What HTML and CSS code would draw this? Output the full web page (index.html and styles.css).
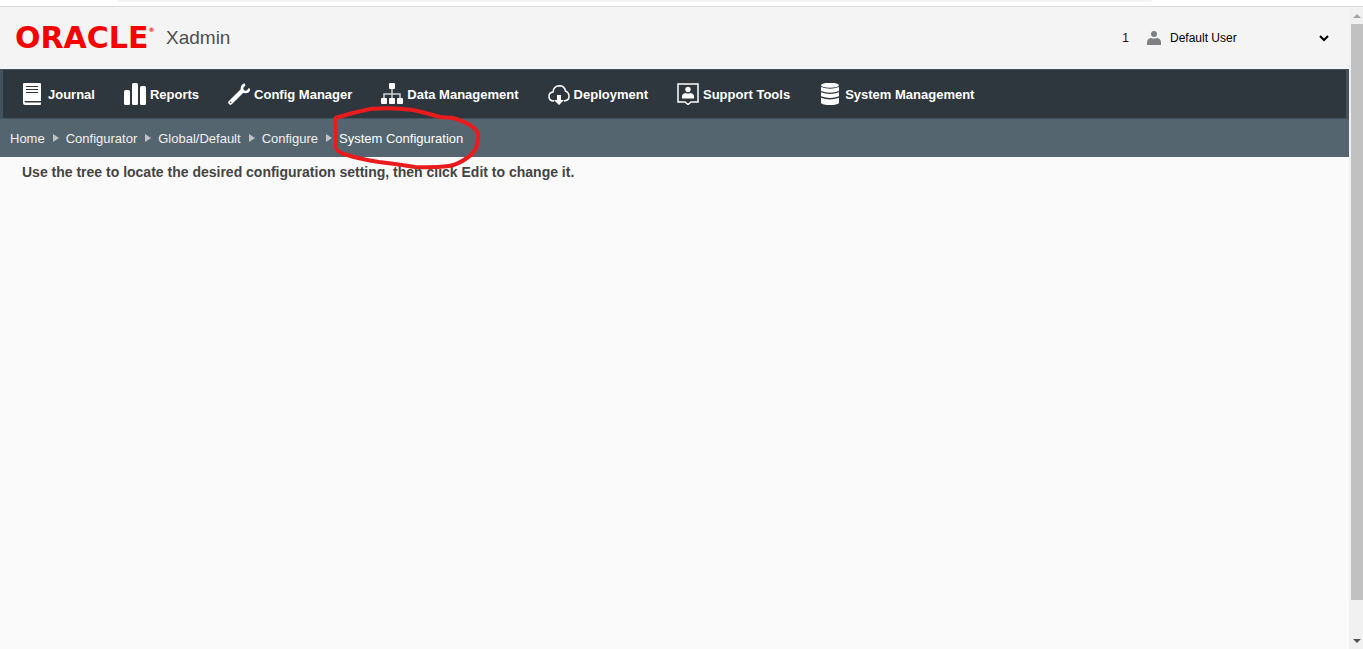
FILE: index.html
```html
<!DOCTYPE html>
<html lang="en">
<head>
    <meta charset="UTF-8">
    <meta name="viewport" content="width=device-width, initial-scale=1.0">
    <title>Xadmin - System Configuration</title>
    <link rel="stylesheet" href="styles.css">
</head>
<body>
    <div class="toolbar"><div class="address"></div></div>
    <div class="window">
        <div class="page">
            <header class="header">
                <a class="logo" href="#">ORACLE<sup>®</sup></a>
                <h1 class="title">Xadmin</h1>
                <div class="user">
                    <span class="count">1</span>
                    <label for="userSelect" aria-label="User">
                        <svg class="avatar" width="14" height="14" viewBox="0 0 14 14" fill="#7d8085">
                            <circle cx="7" cy="3" r="3"/>
                            <path d="M0 14v-2.500q0-4 4-4.500 3 1 6 0 4 .5 4 4.500v2.500z"/>
                        </svg>
                    </label>
                    <select id="userSelect">
                        <option>Default User</option>
                    </select>
                </div>
            </header>

            <nav class="menu">
                <a href="#">
                    <svg viewBox="0 0 22 22" fill="#fff">
                        <path d="M2 0h16q1 0 1 1v17H3.500q-1 0-1 .7t1 .7H19V21q0 1-1 1H3q-2 0-2-2V1q0-1 1-1z"/>
                        <path d="M4 3.500h12M4 6.500h12M4 9.500h12" stroke="#2f373e" stroke-width="1"/>
                    </svg>
                    Journal
                </a>
                <a href="#">
                    <svg viewBox="0 0 22 22" fill="#fff">
                        <rect x="0" y="7" width="6" height="15" rx="1.500"/>
                        <rect x="8" y="0" width="6" height="22" rx="1.500"/>
                        <rect x="16" y="3" width="6" height="19" rx="1.500"/>
                    </svg>
                    Reports
                </a>
                <a href="#">
                    <svg viewBox="0 0 22 22" fill="none" stroke="#fff">
                        <path d="M2.500 19.500L14 8" stroke-width="4.500" stroke-linecap="round"/>
                        <path d="M17 1.500q-3.500 1.300-3 5 .5 2.500 3 2.500 3.500.3 4.500-3.500" stroke-width="2.500"/>
                        <circle cx="2.700" cy="19.300" r=".8" fill="#2f373e" stroke="none"/>
                    </svg>
                    Config Manager
                </a>
                <a href="#">
                    <svg viewBox="0 0 22 22" fill="#fff">
                        <path d="M11 6v10M3 16v-5h16v5" fill="none" stroke="#cfd2d4" stroke-width="1.500"/>
                        <rect x="8" y="0" width="6" height="6" rx="1"/>
                        <rect x="0" y="15" width="6" height="6" rx="1"/>
                        <rect x="8" y="15" width="6" height="6" rx="1"/>
                        <rect x="16" y="15" width="6" height="6" rx="1"/>
                    </svg>
                    Data Management
                </a>
                <a href="#">
                    <svg viewBox="0 0 22 22" fill="none" stroke="#fff" stroke-width="1.500">
                        <path d="M6 18Q1 18 1 13.500 1 9.500 5 9q.5-6 6.500-6.300Q16.500 2.700 17.500 8q3.500 1.500 3.500 5.500 0 4-5 4.500"/>
                        <path d="M9 12h4v5h3l-5 5-5-5h3z" fill="#fff" stroke="none"/>
                    </svg>
                    Deployment
                </a>
                <a href="#">
                    <svg viewBox="0 0 22 22" fill="#fff">
                        <path d="M1 1h20v18h-7l-3 2.500L8 19H1z" fill="none" stroke="#fff" stroke-width="1.500"/>
                        <circle cx="11" cy="6.500" r="2.700"/>
                        <path d="M5 15.500v-2q0-3 3.500-3.500 2.500 1 5 0 3.500.5 3.500 3.500v2z"/>
                    </svg>
                    Support Tools
                </a>
                <a href="#">
                    <svg viewBox="0 0 22 22" fill="#fff">
                        <ellipse cx="11" cy="2.200" rx="9" ry="2.500"/>
                        <path d="M2 4q9 3.500 18 0v4q-9 3.500-18 0z"/>
                        <path d="M2 9.300q9 3.500 18 0v4q-9 3.500-18 0z"/>
                        <path d="M2 14.700q9 3.500 18 0V20q-2 2-9 2t-9-2z"/>
                    </svg>
                    System Management
                </a>
            </nav>

            <ol class="breadcrumbs">
                <li><a href="#">Home</a></li>
                <li><a href="#">Configurator</a></li>
                <li><a href="#">Global/Default</a></li>
                <li><a href="#">Configure</a></li>
                <li class="current">
                    <a href="#">System Configuration</a>
                    <svg class="circle" width="152" height="64" viewBox="332 105 152 64">
                        <path d="M336 117Q352 112 371 108Q393 106 414 109Q428 112 441 116L454 117Q468 121 475 127Q480 131 479 138Q479 150 468 157Q458 164 450 165Q434 167 416 166Q398 163 380 161Q361 158 348 154Q337 151 337 146V132L336 116"/>
                    </svg>
                </li>
            </ol>

            <main class="content">
                <p>Use the tree to locate the desired configuration setting, then click Edit to change it.</p>
            </main>
        </div>

        <div class="scrollbar">
            <div class="arrow up"></div>
            <div class="thumb"></div>
            <div class="arrow down"></div>
        </div>
    </div>
</body>
</html>
```
FILE: styles.css
```css
* {
    box-sizing: border-box;
}

body {
    margin: 0;
    height: 100vh;
    display: flex;
    flex-direction: column;
    overflow: hidden;
    background: #fafafa;
    font-family: Arial, "Liberation Sans", sans-serif;
    font-size: 13px;
}

a {
    color: inherit;
    text-decoration: none;
}

.toolbar {
    height: 7px;
    padding: 0 211px 0 118px;
    background: #fff;
    border-bottom: 1px solid #dadcdc;
}

.address {
    height: 2px;
    background: #f1f3f4;
    border-radius: 0 0 8px 8px;
}

.window {
    flex: 1;
    display: flex;
}

.page {
    flex: 1;
}

.header {
    display: flex;
    align-items: center;
    height: 62px;
    padding: 0 17px 0 15px;
    background: #f4f4f4;
}

.logo {
    display: flex;
    width: 151px;
    color: #f80000;
    font-family: "DejaVu Sans", sans-serif;
    font-size: 30px;
    font-weight: bold;
    line-height: 32px;
}

.logo sup {
    font-size: 6px;
    line-height: 16px;
}

.title {
    margin: 0;
    color: #4f4f4f;
    font-size: 19px;
    font-weight: normal;
}

.user {
    display: flex;
    align-items: center;
    margin-left: auto;
    font-size: 12px;
}

.count {
    margin-right: 18px;
    color: #300010;
}

.avatar {
    display: block;
}

.user select {
    width: 166px;
    margin-left: 5px;
    border: none;
    background: transparent;
    color: #000;
    font-family: inherit;
    font-size: 12px;
}

.menu {
    display: flex;
    align-items: center;
    gap: 29px;
    height: 50px;
    padding: 0 19px;
    background: #2f373e;
    border: 3px solid #43525c;
    border-width: 1px 3px;
    color: #fff;
    font-weight: bold;
}

.menu a {
    display: flex;
    align-items: center;
    gap: 4px;
    white-space: nowrap;
}

.menu svg {
    width: 22px;
    height: 22px;
}

.breadcrumbs {
    display: flex;
    align-items: center;
    height: 38px;
    margin: 0;
    padding: 0 10px;
    list-style: none;
    background: #55656f;
    color: #f0f0f0;
}

.breadcrumbs li {
    display: flex;
    align-items: center;
    position: relative;
}

.breadcrumbs li + li::before {
    content: "";
    margin: 0 7px 0 8px;
    border: 4px solid transparent;
    border-left: 6px solid #bfc2c4;
    border-right: 0;
}

.breadcrumbs .current {
    color: #fff;
}

/* hand drawn marker round the current page */
.circle {
    position: absolute;
    top: -25px;
    right: -20px;
    fill: none;
    stroke: #e81c1c;
    stroke-width: 4;
    stroke-linejoin: round;
    pointer-events: none;
}

.content {
    padding: 7px 22px;
    color: #444;
    font-size: 14px;
    font-weight: bold;
}

.content p {
    margin: 0;
}

.scrollbar {
    display: flex;
    flex-direction: column;
    width: 14px;
    padding-left: 2px;
    background: #f1f1f1;
}

.arrow {
    display: flex;
    align-items: center;
    justify-content: center;
    height: 17px;
}

.arrow::before {
    content: "";
    border: 4px solid transparent;
}

.up::before {
    border-top: 0;
    border-bottom-color: #a3a3a3;
}

.down::before {
    border-bottom: 0;
    border-top-color: #505050;
}

.thumb {
    flex: 1;
    margin-bottom: 32px;
    background: #c1c1c1;
}
```
